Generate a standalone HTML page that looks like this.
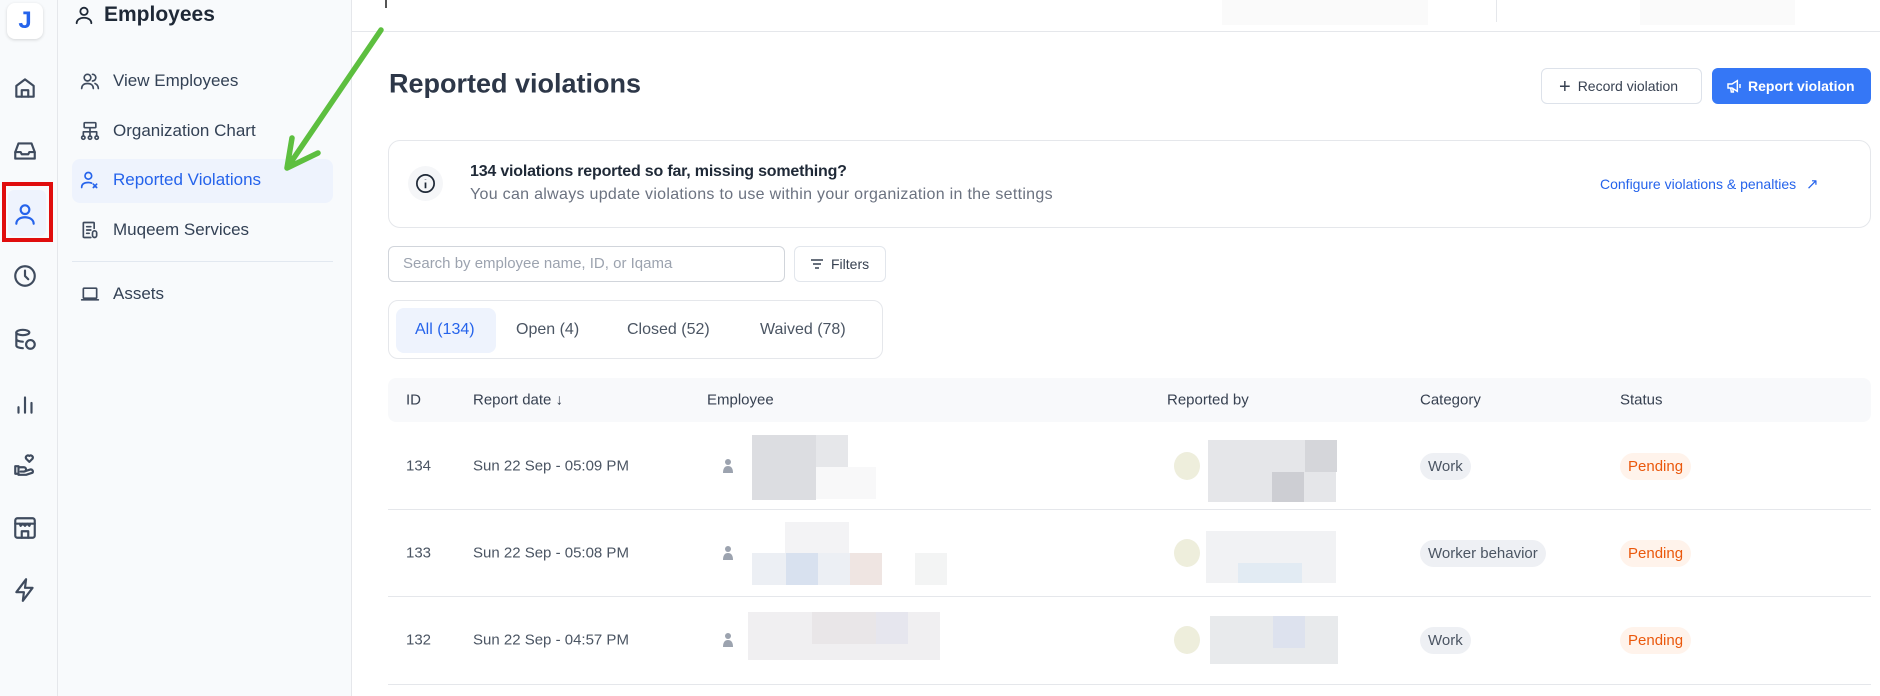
<!DOCTYPE html>
<html><head><meta charset="utf-8"><style>
*{box-sizing:border-box;margin:0;padding:0}
body{width:1880px;height:696px;overflow:hidden;background:#fff;font-family:"Liberation Sans",sans-serif;color:#1f2937;position:relative}
.abs{position:absolute}
.rail{left:0;top:0;width:58px;height:696px;background:#f8fafc;border-right:1px solid #e5e7eb}
.side{left:58px;top:0;width:294px;height:696px;background:#f8fafc;border-right:1px solid #e5e7eb}
.ic{position:absolute;left:12px;width:26px;height:26px}
.ic svg,.si svg{width:100%;height:100%;fill:none;stroke:#3f4b5e;stroke-width:2;stroke-linecap:round;stroke-linejoin:round}
.si{position:absolute;left:22px;width:20px;height:20px}
.st{position:absolute;left:55px;font-size:17px;color:#334155;transform:translateY(-50%)}
.t{position:absolute;transform:translateY(-50%);white-space:nowrap}
.blur{position:absolute}
.chip{position:absolute;height:27px;border-radius:14px;font-size:15px;line-height:27px;padding:0 8px}
</style></head><body>
<div class="abs rail">
 <div class="abs" style="left:7px;top:3px;width:36px;height:36px;border-radius:8px;background:#fff;box-shadow:0 1px 3px rgba(0,0,0,.15);color:#2563eb;font-weight:900;font-size:24px;text-align:center;line-height:36px">J</div>
 <div class="ic" style="top:75px"><svg viewBox="0 0 24 24"><path d="M4 10l8-6 8 6v10H4z"/><path d="M9 20v-6h6v6"/></svg></div>
 <div class="ic" style="top:138px"><svg viewBox="0 0 24 24"><path d="M3 13l3-8h12l3 8v6H3z"/><path d="M3 13h5l1 2h6l1-2h5"/></svg></div>
 <div class="abs" style="left:8px;top:190px;width:38px;height:46px;background:#eef3fd;border-radius:6px"></div>
 <div class="abs" style="left:2px;top:182px;width:51px;height:60px;border:4px solid #e00d0d"></div>
 <div class="ic" style="top:201px"><svg viewBox="0 0 24 24" style="stroke:#2563eb"><circle cx="12" cy="8" r="4"/><path d="M4 21c0-4 4-6 8-6s8 2 8 6"/></svg></div>
 <div class="ic" style="top:263px"><svg viewBox="0 0 24 24"><circle cx="12" cy="12" r="9"/><path d="M12 7v5l3 3"/></svg></div>
 <div class="ic" style="top:326px"><svg viewBox="0 0 24 24"><ellipse cx="10" cy="6" rx="6" ry="2.5"/><path d="M4 6v12c0 1.4 2.7 2.5 6 2.5M4 12c0 1.4 2.7 2.5 6 2.5"/><circle cx="17" cy="17" r="4"/></svg></div>
 <div class="ic" style="top:391px"><svg viewBox="0 0 24 24"><path d="M6 20v-5M12 20V6M18 20v-9"/></svg></div>
 <div class="ic" style="top:451px"><svg viewBox="0 0 24 24"><path d="M3 14h3v7H3zM6 15h5a2 2 0 010 4H8M11 19l6-2a2 2 0 012 3l-6 2H6"/><path d="M16 10l-3-3a2 2 0 013-2.5 2 2 0 013 2.5z"/></svg></div>
 <div class="ic" style="top:515px"><svg viewBox="0 0 24 24"><rect x="3" y="3" width="18" height="18" rx="2"/><path d="M3 8h18M7 8l1 2 2-2 2 2 2-2 2 2 1-2M9 21v-6h6v6"/></svg></div>
 <div class="ic" style="top:577px"><svg viewBox="0 0 24 24"><path d="M13 2L4 14h7l-1 8 9-12h-7z"/></svg></div>
</div>
<div class="abs side">
 <div class="si" style="left:15px;top:4px;width:22px;height:22px"><svg viewBox="0 0 24 24" style="stroke:#1f2937"><circle cx="12" cy="8" r="4"/><path d="M4 21c0-4 4-6 8-6s8 2 8 6"/></svg></div>
 <div class="t" style="left:46px;top:15px;font-size:21px;font-weight:bold;color:#1f2937">Employees</div>
 <div class="si" style="top:71px"><svg viewBox="0 0 24 24"><circle cx="9" cy="8" r="4"/><path d="M2 21c0-4 3-6 7-6s7 2 7 6M15 4a4 4 0 010 8M18 15c2 1 4 3 4 6"/></svg></div>
 <div class="st" style="top:81px">View Employees</div>
 <div class="si" style="top:121px"><svg viewBox="0 0 24 24"><rect x="5" y="2" width="14" height="6" rx="1"/><path d="M12 8v5M4 17v-4h16v4M12 13v4"/><circle cx="4" cy="20" r="2"/><circle cx="12" cy="20" r="2"/><circle cx="20" cy="20" r="2"/></svg></div>
 <div class="st" style="top:131px">Organization Chart</div>
 <div class="abs" style="left:14px;top:159px;width:261px;height:44px;background:#eef3fd;border-radius:8px"></div>
 <div class="si" style="top:170px"><svg viewBox="0 0 24 24" style="stroke:#2563eb"><circle cx="10" cy="7" r="4"/><path d="M2 21c0-4 3-6 8-6 2 0 3 .3 4 .8M16 17l4 4M20 17l-4 4"/></svg></div>
 <div class="st" style="top:180px;color:#2563eb">Reported Violations</div>
 <div class="si" style="top:220px"><svg viewBox="0 0 24 24"><path d="M17 10V4a1 1 0 00-1-1H5a1 1 0 00-1 1v16a1 1 0 001 1h8M8 8h5M8 12h5M8 16h3"/><rect x="15" y="13" width="5" height="8" rx="2.5"/></svg></div>
 <div class="st" style="top:230px">Muqeem Services</div>
 <div class="abs" style="left:14px;top:261px;width:261px;height:1px;background:#e2e8f0"></div>
 <div class="si" style="top:284px"><svg viewBox="0 0 24 24"><rect x="4" y="5" width="16" height="12" rx="1"/><path d="M2 19h20"/></svg></div>
 <div class="st" style="top:294px">Assets</div>
</div>
<!-- top header -->
<div class="abs" style="left:352px;top:31px;width:1528px;height:1px;background:#e5e7eb"></div>
<div class="abs" style="left:385px;top:0;width:2px;height:8px;background:#555"></div>
<div class="abs" style="left:1222px;top:0;width:206px;height:25px;background:#fafafa"></div>
<div class="abs" style="left:1496px;top:0;width:1px;height:22px;background:#e5e7eb"></div>
<div class="abs" style="left:1640px;top:0;width:155px;height:25px;background:#fafafa"></div>
<!-- green arrow -->
<svg class="abs" style="left:270px;top:20px" width="130" height="160" viewBox="270 20 130 160"><path d="M381 30L287 168M287 168L292 138M287 168L318 153" stroke="#5dbf3f" stroke-width="5.5" stroke-linecap="round" fill="none"/></svg>
<div class="t" style="left:389px;top:84px;font-size:27px;font-weight:bold;color:#2d3748">Reported violations</div>
<div class="abs" style="left:1541px;top:68px;width:161px;height:36px;border:1px solid #dde2ea;border-radius:6px;background:#fff;font-size:14px;color:#374151;line-height:34px;padding-left:17px"><span style="font-size:20px;vertical-align:-2px;margin-right:7px">+</span>Record violation</div>
<div class="abs" style="left:1712px;top:68px;width:159px;height:36px;border-radius:6px;background:#3577f6;font-size:14px;color:#fff;line-height:36px;padding-left:14px;font-weight:bold"><svg width="16" height="16" viewBox="0 0 24 24" style="vertical-align:-3px;margin-right:6px;fill:none;stroke:#fff;stroke-width:2.2"><path d="M3 9h6l8-5v16l-8-5H3zM7 15l1 6h3l-1-6M21 9v6"/></svg>Report violation</div>
<!-- info card -->
<div class="abs" style="left:388px;top:140px;width:1483px;height:88px;border:1px solid #e5e7eb;border-radius:12px"></div>
<div class="abs" style="left:408px;top:166px;width:35px;height:35px;border-radius:50%;background:#f5f6f8"></div>
<svg class="abs" style="left:414px;top:172px" width="23" height="23" viewBox="0 0 24 24" fill="none" stroke="#1f2937" stroke-width="1.8"><circle cx="12" cy="12" r="9"/><path d="M12 11v6M12 7.5v.5"/></svg>
<div class="t" style="left:470px;top:172px;font-size:16px;font-weight:bold;color:#1f2937;letter-spacing:-0.2px">134 violations reported so far, missing something?</div>
<div class="t" style="left:470px;top:195px;font-size:16px;color:#6b7280;letter-spacing:0.3px">You can always update violations to use within your organization in the settings</div>
<div class="t" style="left:1600px;top:184px;font-size:14px;color:#2563eb">Configure violations &amp; penalties <span style="margin-left:6px;font-size:15px">↗</span></div>
<!-- search -->
<div class="abs" style="left:388px;top:246px;width:397px;height:36px;border:1px solid #d1d5db;border-radius:6px;font-size:15px;color:#9ca3af;line-height:34px;padding-left:14px">Search by employee name, ID, or Iqama</div>
<div class="abs" style="left:794px;top:246px;width:92px;height:36px;border:1px solid #e2e6ec;border-radius:6px;font-size:14px;color:#374151;line-height:34px;padding-left:14px"><svg width="16" height="14" viewBox="0 0 16 14" style="vertical-align:-2px;margin-right:6px" stroke="#374151" stroke-width="1.6"><path d="M2 3h12M4 7h8M6 11h4"/></svg>Filters</div>
<!-- tabs -->
<div class="abs" style="left:388px;top:300px;width:495px;height:59px;border:1px solid #e5e7eb;border-radius:10px"></div>
<div class="abs" style="left:396px;top:308px;width:100px;height:45px;border-radius:8px;background:#eef3fd"></div>
<div class="t" style="left:415px;top:330px;font-size:16px;color:#2563eb">All (134)</div>
<div class="t" style="left:516px;top:330px;font-size:16px;color:#4b5563">Open (4)</div>
<div class="t" style="left:627px;top:330px;font-size:16px;color:#4b5563">Closed (52)</div>
<div class="t" style="left:760px;top:330px;font-size:16px;color:#4b5563">Waived (78)</div>
<!-- table -->
<div class="abs" style="left:388px;top:378px;width:1483px;height:44px;background:#f8f9fb;border-radius:8px"></div>
<div class="t" style="left:406px;top:400px;font-size:15px;color:#374151">ID</div>
<div class="t" style="left:473px;top:400px;font-size:15px;color:#374151">Report date ↓</div>
<div class="t" style="left:707px;top:400px;font-size:15px;color:#374151">Employee</div>
<div class="t" style="left:1167px;top:400px;font-size:15px;color:#374151">Reported by</div>
<div class="t" style="left:1420px;top:400px;font-size:15px;color:#374151">Category</div>
<div class="t" style="left:1620px;top:400px;font-size:15px;color:#374151">Status</div>
<div class="abs" style="left:388px;top:509px;width:1483px;height:1px;background:#e5e7eb"></div>
<div class="abs" style="left:388px;top:596px;width:1483px;height:1px;background:#e5e7eb"></div>
<div class="abs" style="left:388px;top:684px;width:1483px;height:1px;background:#e5e7eb"></div>

<div class="t" style="left:406px;top:466px;font-size:15px;color:#4b5563">134</div>
<div class="t" style="left:473px;top:466px;font-size:15px;color:#4b5563">Sun 22 Sep - 05:09 PM</div>
<div class="t" style="left:406px;top:553px;font-size:15px;color:#4b5563">133</div>
<div class="t" style="left:473px;top:553px;font-size:15px;color:#4b5563">Sun 22 Sep - 05:08 PM</div>
<div class="t" style="left:406px;top:640px;font-size:15px;color:#4b5563">132</div>
<div class="t" style="left:473px;top:640px;font-size:15px;color:#4b5563">Sun 22 Sep - 04:57 PM</div>

<svg class="abs" style="left:722px;top:458px" width="12" height="16" viewBox="0 0 12 16" fill="#9ca3af"><circle cx="6" cy="4" r="3"/><path d="M1 15c0-5 2-7 5-7s5 2 5 7z"/></svg>
<svg class="abs" style="left:722px;top:545px" width="12" height="16" viewBox="0 0 12 16" fill="#9ca3af"><circle cx="6" cy="4" r="3"/><path d="M1 15c0-5 2-7 5-7s5 2 5 7z"/></svg>
<svg class="abs" style="left:722px;top:632px" width="12" height="16" viewBox="0 0 12 16" fill="#9ca3af"><circle cx="6" cy="4" r="3"/><path d="M1 15c0-5 2-7 5-7s5 2 5 7z"/></svg>

<div class="blur" style="left:752px;top:435px;width:64px;height:65px;background:#dcdde1"></div>
<div class="blur" style="left:816px;top:435px;width:32px;height:32px;background:#e6e7ea"></div>
<div class="blur" style="left:816px;top:467px;width:60px;height:32px;background:#f8f8f9"></div>
<div class="blur" style="left:752px;top:553px;width:130px;height:32px;background:#eceff4"></div>
<div class="blur" style="left:785px;top:522px;width:64px;height:31px;background:#f3f3f5"></div>
<div class="blur" style="left:786px;top:553px;width:32px;height:32px;background:#d8e1ef"></div>
<div class="blur" style="left:850px;top:553px;width:32px;height:32px;background:#efe5e2"></div>
<div class="blur" style="left:915px;top:553px;width:32px;height:32px;background:#f3f4f4"></div>
<div class="blur" style="left:748px;top:612px;width:192px;height:48px;background:#f0eff1"></div>
<div class="blur" style="left:812px;top:612px;width:64px;height:32px;background:#e9e6e8"></div>
<div class="blur" style="left:876px;top:612px;width:32px;height:32px;background:#e6e6ee"></div>

<div class="blur" style="left:1174px;top:452px;width:26px;height:28px;border-radius:50%;background:#eeeedc"></div>
<div class="blur" style="left:1174px;top:539px;width:26px;height:28px;border-radius:50%;background:#eeeedc"></div>
<div class="blur" style="left:1174px;top:626px;width:26px;height:28px;border-radius:50%;background:#eeeedc"></div>
<div class="blur" style="left:1208px;top:440px;width:128px;height:62px;background:#e5e6e9"></div>
<div class="blur" style="left:1272px;top:472px;width:32px;height:30px;background:#cdced3"></div>
<div class="blur" style="left:1305px;top:440px;width:32px;height:32px;background:#d5d6da"></div>
<div class="blur" style="left:1206px;top:531px;width:130px;height:52px;background:#f1f2f4"></div>
<div class="blur" style="left:1238px;top:563px;width:64px;height:20px;background:#e2ebf3"></div>
<div class="blur" style="left:1210px;top:616px;width:128px;height:48px;background:#e8eaec"></div>
<div class="blur" style="left:1273px;top:616px;width:32px;height:32px;background:#dde2ee"></div>

<div class="chip" style="left:1420px;top:453px;background:#eef0f4;color:#4b5563">Work</div>
<div class="chip" style="left:1420px;top:540px;background:#eef0f4;color:#4b5563">Worker behavior</div>
<div class="chip" style="left:1420px;top:627px;background:#eef0f4;color:#4b5563">Work</div>
<div class="chip" style="left:1620px;top:453px;background:#fff3eb;color:#ea580c">Pending</div>
<div class="chip" style="left:1620px;top:540px;background:#fff3eb;color:#ea580c">Pending</div>
<div class="chip" style="left:1620px;top:627px;background:#fff3eb;color:#ea580c">Pending</div>
</body></html>
